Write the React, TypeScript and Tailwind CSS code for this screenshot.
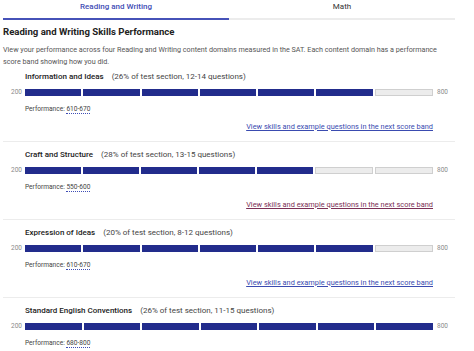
import React from "react";

type Domain = {
  name: string;
  meta: string;
  filled: number;
  score: string;
  link?: "blue" | "visited";
};

const domains: Domain[] = [
  { name: "Information and Ideas", meta: "(26% of test section, 12-14 questions)", filled: 6, score: "610-670", link: "blue" },
  { name: "Craft and Structure", meta: "(28% of test section, 13-15 questions)", filled: 5, score: "550-600", link: "visited" },
  { name: "Expression of Ideas", meta: "(20% of test section, 8-12 questions)", filled: 6, score: "610-670", link: "blue" },
  { name: "Standard English Conventions", meta: "(26% of test section, 11-15 questions)", filled: 7, score: "680-800" },
];

const ScoreBar = ({ filled }: { filled: number }) => (
  <div className="flex items-center h-[7px]">
    <span className="w-[22px] pr-[3px] text-right text-[6.5px] leading-[7px] text-[#8a8a8a]">200</span>
    <div className="flex w-[408px] gap-[2px] h-[7px]">
      {Array.from({ length: 7 }).map((_, i) =>
        i < filled ? (
          <div key={i} className="flex-1 bg-[#222c8c]" />
        ) : (
          <div key={i} className="flex-1 bg-[#ececec] border border-[#cfcfcf]" />
        )
      )}
    </div>
    <span className="pl-[4px] text-[6.5px] leading-[7px] text-[#8a8a8a]">800</span>
  </div>
);

const Section = ({ d, first, last }: { d: Domain; first: boolean; last: boolean }) => (
  <div className={`${first ? "pt-[3px]" : "pt-[7px]"} ${last ? "" : "border-b border-[#ececec] pb-[9px]"}`}>
    <div className="pl-[22px] text-[8px] leading-[11px] text-[#222]">
      <span className="font-medium">{d.name}</span>
      <span className="ml-[8px] text-[#444]">{d.meta}</span>
    </div>
    <div className="mt-[7px]">
      <ScoreBar filled={d.filled} />
    </div>
    <div className="pl-[22px] mt-[8px] text-[6.6px] leading-[10px] text-[#444]">
      Performance:{" "}
      <span className="border-b border-dotted border-[#3f4db5]">{d.score}</span>
    </div>
    {d.link && (
      <div className="flex justify-end pr-[22px] mt-[8px]">
        <a
          href="#"
          className={`text-[7.4px] leading-[10px] underline ${
            d.link === "blue" ? "text-[#3a4bb0]" : "text-[#7b2f55]"
          }`}
        >
          View skills and example questions in the next score band
        </a>
      </div>
    )}
  </div>
);

export default function App() {
  return (
    <div className="w-[474px] h-[351px] overflow-hidden bg-white font-['Roboto',sans-serif]">
      <div className="ml-[3px] w-[452px]">
        {/* Tabs */}
        <div className="flex border-b-2 border-[#ececec] h-[20px]">
          <div className="flex-1 flex items-center justify-center pb-[4px] text-[8px] font-medium text-[#3f4db5] border-b-2 border-[#4652b8] -mb-[2px]">
            Reading and Writing
          </div>
          <div className="flex-1 flex items-center justify-center pb-[4px] text-[8px] text-[#333]">Math</div>
        </div>

        <h2 className="mt-[5px] text-[9.6px] leading-[13px] font-bold text-[#222]">
          Reading and Writing Skills Performance
        </h2>
        <p className="mt-[6px] text-[7.2px] leading-[12px] text-[#555]">
          View your performance across four Reading and Writing content domains measured in the SAT. Each content domain has a performance score band showing how you did.
        </p>

        <div>
          {domains.map((d, i) => (
            <Section key={d.name} d={d} first={i === 0} last={i === domains.length - 1} />
          ))}
        </div>
      </div>
    </div>
  );
}
